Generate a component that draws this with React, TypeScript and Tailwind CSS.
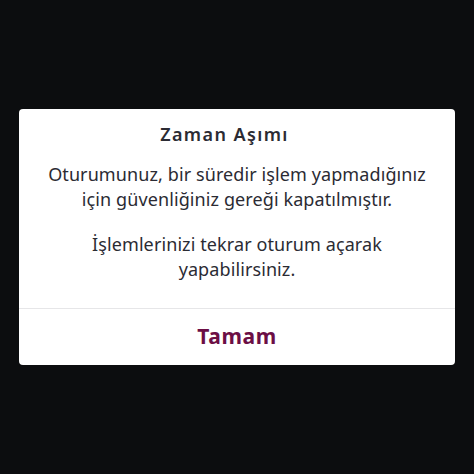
export default function App() {
  return (
    <div
      className="flex h-[474px] w-[474px] flex-col bg-[#0c0d0f] pt-[109px] pl-[19px]"
      style={{ fontFamily: '"Noto Sans", "Open Sans", sans-serif' }}
    >
      <div className="w-[436px] overflow-hidden rounded-[4px] bg-white">
        <div className="flex h-[199px] flex-col items-center pt-[13px] text-center text-[#2b2b33]">
          <h2 className="mr-[25px] text-[18px] font-semibold leading-[24px] tracking-[1.4px]">Zaman Aşımı</h2>
          <p className="mt-[16px] text-[18px] leading-[24.5px] tracking-[0.1px]">
            Oturumunuz, bir süredir işlem yapmadığınız
            <br />
            için güvenliğiniz gereği kapatılmıştır.
          </p>
          <p className="mt-[21px] text-[18px] leading-[24.5px] tracking-[0.1px]">
            İşlemlerinizi tekrar oturum açarak
            <br />
            yapabilirsiniz.
          </p>
        </div>
        <div className="h-[1px] bg-[#e6e6e8]" />
        <button className="flex h-[56px] w-full items-center justify-center text-[21px] font-bold tracking-[0.6px] text-[#6c0e45]">
          Tamam
        </button>
      </div>
    </div>
  );
}
